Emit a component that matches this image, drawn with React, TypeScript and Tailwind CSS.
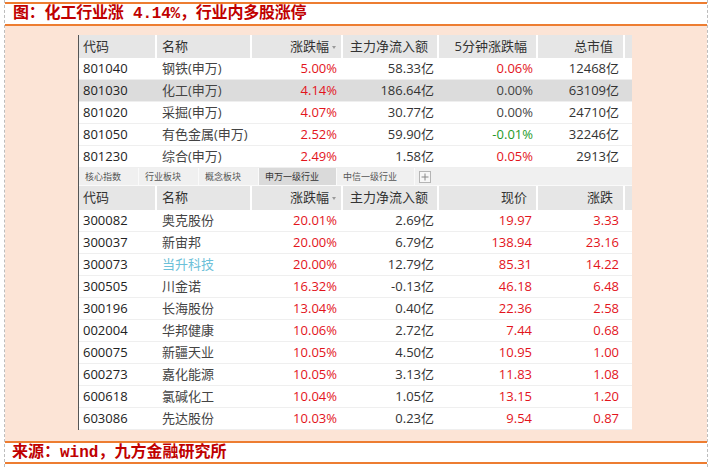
const top = [
  { code: "801040", name: "钢铁(申万)", pct: "5.00%", flow: "58.33亿", m5: "0.06%", m5c: "up", cap: "12468亿" },
  { code: "801030", name: "化工(申万)", pct: "4.14%", flow: "186.64亿", m5: "0.00%", m5c: "flat", cap: "63109亿", active: true },
  { code: "801020", name: "采掘(申万)", pct: "4.07%", flow: "30.77亿", m5: "0.00%", m5c: "flat", cap: "24710亿" },
  { code: "801050", name: "有色金属(申万)", pct: "2.52%", flow: "59.90亿", m5: "-0.01%", m5c: "down", cap: "32246亿" },
  { code: "801230", name: "综合(申万)", pct: "2.49%", flow: "1.58亿", m5: "0.05%", m5c: "up", cap: "2913亿" },
];

const stocks = [
  { code: "300082", name: "奥克股份", pct: "20.01%", flow: "2.69亿", price: "19.97", chg: "3.33" },
  { code: "300037", name: "新宙邦", pct: "20.00%", flow: "6.79亿", price: "138.94", chg: "23.16" },
  { code: "300073", name: "当升科技", pct: "20.00%", flow: "12.79亿", price: "85.31", chg: "14.22", link: true },
  { code: "300505", name: "川金诺", pct: "16.32%", flow: "-0.13亿", price: "46.18", chg: "6.48" },
  { code: "300196", name: "长海股份", pct: "13.04%", flow: "0.40亿", price: "22.36", chg: "2.58" },
  { code: "002004", name: "华邦健康", pct: "10.06%", flow: "2.72亿", price: "7.44", chg: "0.68" },
  { code: "600075", name: "新疆天业", pct: "10.05%", flow: "4.50亿", price: "10.95", chg: "1.00" },
  { code: "600273", name: "嘉化能源", pct: "10.05%", flow: "3.13亿", price: "11.83", chg: "1.08" },
  { code: "600618", name: "氯碱化工", pct: "10.04%", flow: "1.05亿", price: "13.15", chg: "1.20" },
  { code: "603086", name: "先达股份", pct: "10.03%", flow: "0.23亿", price: "9.54", chg: "0.87" },
];

const tabs = ["核心指数", "行业板块", "概念板块", "申万一级行业", "中信一级行业"];

const cols = "grid grid-cols-[78px_95px_91px_96px_99px_87px_7px]";
const m5Color: Record<string, string> = { up: "text-[#e3141c]", flat: "text-[#444]", down: "text-[#1f9a2a]" };

function Header({ last, tall }: { last: [string, string]; tall?: boolean }) {
  const cell = "flex items-center border-r-2 border-white";
  return (
    <div className={`${cols} ${tall ? "h-[24px]" : "h-[23px]"} bg-[#e6e6e6] text-[#333]`}>
      <div className={`${cell} pl-[4px]`}>代码</div>
      <div className={`${cell} pl-[5px]`}>名称</div>
      <div className={`${cell} justify-end pr-[5px]`}>
        涨跌幅
        <span className="ml-[3px] mt-[1px] border-l-[2.5px] border-r-[2.5px] border-t-[3px] border-l-transparent border-r-transparent border-t-[#999]" />
      </div>
      <div className={`${cell} justify-end pr-[9px]`}>主力净流入额</div>
      <div className={`${cell} justify-end pr-[9px]`}>{last[0]}</div>
      <div className={`${cell} justify-end pr-[10px]`}>{last[1]}</div>
      <div />
    </div>
  );
}

export default function App() {
  return (
    <div className="w-[711px] h-[467px] bg-white font-['Open_Sans','Noto_Sans_CJK_SC',sans-serif] text-[13px]">
      <div className="ml-[4px] w-[704px] h-[467px] border-l border-r border-dashed border-[#bdbdbd] pt-[2px]">
        <div className="h-[2px] bg-[#ed7d31]" />
        <div className="h-[20px] flex items-center pl-[8px] font-['Liberation_Mono','Noto_Sans_CJK_SC',monospace] font-bold text-[16px] leading-none text-[#c00000] tracking-[-0.2px]">
          图：化工行业涨 4.14%，行业内多股涨停
        </div>
        <div className="h-[2px] bg-[#ed7d31]" />

        <div className="h-[415px] bg-[#fce4d6] pt-[9px] pl-[73px]">
          <div className="w-[554px] border-l border-[#555]">
            <Header last={["5分钟涨跌幅", "总市值"]} />
            {top.map((r) => (
              <div
                key={r.code}
                className={`${cols} h-[22px] items-center border-b border-[#efefef] ${r.active ? "bg-[#dcdcdc]" : "bg-white"}`}
              >
                <div className="pl-[4px] text-[#222]">{r.code}</div>
                <div className="pl-[5px] text-[#444]">{r.name}</div>
                <div className="text-right pr-[6px] text-[#e3141c]">{r.pct}</div>
                <div className="text-right pr-[5px] text-[#333]">{r.flow}</div>
                <div className={`text-right pr-[5px] ${m5Color[r.m5c]}`}>{r.m5}</div>
                <div className="text-right pr-[6px] text-[#333]">{r.cap}</div>
                <div />
              </div>
            ))}

            <div className="h-[18px] flex items-stretch bg-[#f0f0f0] text-[9px] text-[#555] border-b border-[#fafafa]">
              {tabs.map((t, i) => (
                <div
                  key={t}
                  className={`flex items-center pl-[6px] pr-[17px] border-r border-[#fafafa] ${i === 3 ? "bg-[#dadada] text-[#333]" : ""}`}
                >
                  {t}
                </div>
              ))}
              <div className="flex items-center ml-[4px]">
                <svg width="12" height="12" viewBox="0 0 12 12">
                  <rect x="0.5" y="0.5" width="11" height="11" fill="#f7f7f7" stroke="#b5b5b5" />
                  <path d="M6 2.5V9.5M2.5 6H9.5" stroke="#888" strokeWidth="1" />
                </svg>
              </div>
            </div>

            <Header last={["现价", "涨跌"]} tall />
            {stocks.map((r) => (
              <div key={r.code} className={`${cols} h-[22px] items-center border-b border-[#efefef] bg-white`}>
                <div className="pl-[4px] text-[#222]">{r.code}</div>
                <div className={`pl-[5px] ${r.link ? "text-[#6cc0d8]" : "text-[#444]"}`}>{r.name}</div>
                <div className="text-right pr-[6px] text-[#e3141c]">{r.pct}</div>
                <div className="text-right pr-[5px] text-[#333]">{r.flow}</div>
                <div className="text-right pr-[6px] text-[#e3141c]">{r.price}</div>
                <div className="text-right pr-[6px] text-[#e3141c]">{r.chg}</div>
                <div />
              </div>
            ))}
          </div>
        </div>

        <div className="h-[2px] bg-[#ed7d31]" />
        <div className="h-[19px] flex items-center pl-[7px] font-['Liberation_Mono','Noto_Sans_CJK_SC',monospace] font-bold text-[16px] leading-none text-[#c00000]">
          来源：wind，九方金融研究所
        </div>
        <div className="h-[2px] bg-[#ed7d31]" />
      </div>
    </div>
  );
}
